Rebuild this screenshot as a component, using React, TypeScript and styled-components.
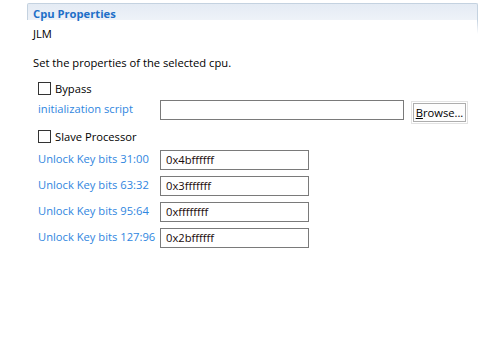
import React from "react";
import styled, { createGlobalStyle } from "styled-components";

const Global = createGlobalStyle`
  html, body { margin: 0; padding: 0; background: #ffffff; }
  body { font-family: "Open Sans", "Noto Sans", sans-serif; font-size: 11.2px; color: #000; }
`;

const Page = styled.div`
  width: 492px;
  height: 338px;
  box-sizing: border-box;
  padding: 3px 14px 0 27px;
`;

const SectionHeader = styled.div`
  height: 16px;
  border: 1px solid #c4d2e0;
  border-bottom: none;
  border-radius: 2px 2px 0 0;
  background: linear-gradient(to bottom, #e4ebf4, #eef2f8);
  display: flex;
  align-items: flex-end;
  padding-left: 5px;
  position: relative;
`;

const RightFade = styled.div`
  position: absolute;
  right: -1px;
  top: 16px;
  width: 1px;
  height: 14px;
  background: linear-gradient(to bottom, #c4d2e0, rgba(196, 210, 224, 0));
`;

const Title = styled.span`
  font-weight: 700;
  font-size: 11.2px;
  color: #1e6fc8;
  line-height: 16px;
  margin-bottom: -2px;
`;

const Body = styled.div`
  padding-left: 6px;
  display: flex;
  flex-direction: column;
`;

const Plain = styled.div<{ $mt: number }>`
  line-height: 16px;
  margin-top: ${(p) => p.$mt}px;
`;

const Form = styled.div`
  display: flex;
  flex-direction: column;
  padding-left: 5px;
`;

const CheckRow = styled.label<{ $mt: number }>`
  display: flex;
  align-items: center;
  gap: 4px;
  height: 15px;
  margin-top: ${(p) => p.$mt}px;
`;

const Box = styled.span`
  width: 11px;
  height: 11px;
  border: 1px solid #333;
  background: #fff;
`;

const FieldRow = styled.div<{ $mt: number }>`
  display: flex;
  align-items: flex-start;
  margin-top: ${(p) => p.$mt}px;
`;

const Label = styled.div`
  width: 122px;
  flex: none;
  color: #2f86e0;
  line-height: 16px;
  padding-top: 1px;
  white-space: nowrap;
`;

const Field = styled.div<{ $w: number }>`
  width: ${(p) => p.$w}px;
  height: 20px;
  box-sizing: border-box;
  border: 1px solid #7a7a7a;
  padding: 0 5px;
  line-height: 18px;
  color: #1a0a0a;
  flex: none;
`;

const Button = styled.div`
  width: 57px;
  height: 23px;
  margin-left: 7px;
  margin-top: 1px;
  box-sizing: border-box;
  border: 1px solid #e3e3e3;
  background: #fff;
  display: flex;
  padding: 1px;
`;

const ButtonFace = styled.div`
  flex: 1;
  border: 1px solid #adadad;
  background: #fdfdfd;
  display: flex;
  align-items: center;
  justify-content: center;
  line-height: 16px;
`;

const keys = [
  ["Unlock Key bits 31:00", "0x4bffffff"],
  ["Unlock Key bits 63:32", "0x3fffffff"],
  ["Unlock Key bits 95:64", "0xffffffff"],
  ["Unlock Key bits 127:96", "0x2bffffff"],
];

export default function App() {
  return (
    <Page>
      <Global />
      <SectionHeader>
        <Title>Cpu Properties</Title>
        <RightFade />
      </SectionHeader>
      <Body>
        <Plain $mt={6}>JLM</Plain>
        <Plain $mt={13}>Set the properties of the selected cpu.</Plain>
        <Form>
          <CheckRow $mt={10}>
            <Box />
            Bypass
          </CheckRow>
          <FieldRow $mt={4}>
            <Label>initialization script</Label>
            <Field $w={244} />
            <Button>
              <ButtonFace>
                <span>
                  <u>B</u>rowse...
                </span>
              </ButtonFace>
            </Button>
          </FieldRow>
          <CheckRow $mt={5}>
            <Box />
            Slave Processor
          </CheckRow>
          {keys.map(([l, v], i) => (
            <FieldRow key={l} $mt={i === 0 ? 6 : 6}>
              <Label>{l}</Label>
              <Field $w={149}>{v}</Field>
            </FieldRow>
          ))}
        </Form>
      </Body>
    </Page>
  );
}
